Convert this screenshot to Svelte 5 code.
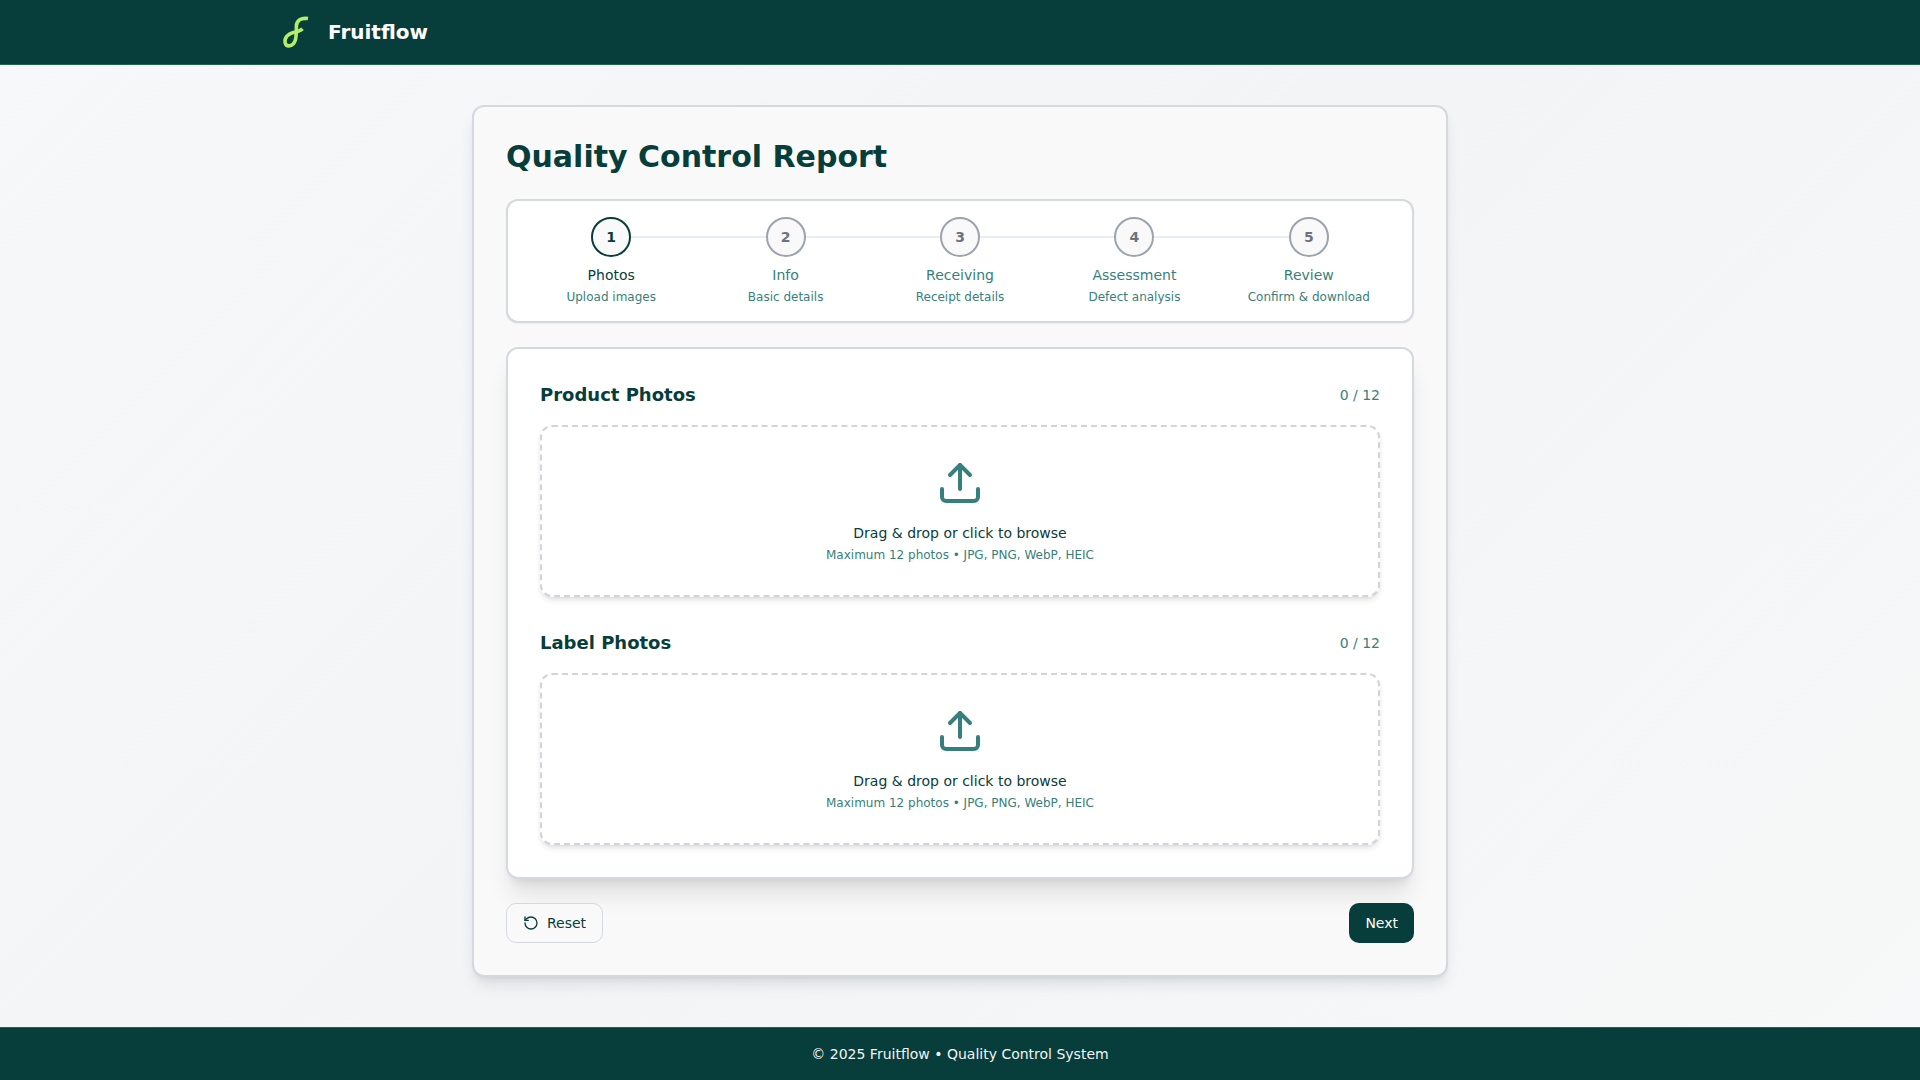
<script>
  const steps = [
    { title: 'Photos', description: 'Upload images' },
    { title: 'Info', description: 'Basic details' },
    { title: 'Receiving', description: 'Receipt details' },
    { title: 'Assessment', description: 'Defect analysis' },
    { title: 'Review', description: 'Confirm & download' }
  ];

  const MAX_PHOTOS = 12;

  let current = $state(0);
  let sections = $state([
    { id: 'product', title: 'Product Photos', count: 0 },
    { id: 'label', title: 'Label Photos', count: 0 }
  ]);

  function addFiles(section, files) {
    section.count = Math.min(MAX_PHOTOS, section.count + files.length);
  }

  function handleDrop(event, section) {
    event.preventDefault();
    addFiles(section, event.dataTransfer.files);
  }

  function reset() {
    current = 0;
    for (const section of sections) section.count = 0;
  }

  function next() {
    if (current < steps.length - 1) current += 1;
  }
</script>

<div class="page">
  <header class="site-header">
    <div class="header-inner">
      <a href="/" class="brand">
        <svg class="logo" viewBox="0 0 40 40" fill="none" stroke="currentColor" stroke-width="3.6" stroke-linejoin="round" aria-hidden="true">
          <path d="M32 6.600C25 5.400 20.600 8.500 20.400 14C20.200 20 20.600 25 19 29C17 34.500 10.500 35.500 9.200 31C8 26 12 22 16.500 20.800C20.500 19.800 24 19.500 26.500 16.800" />
        </svg>
        <span class="brand-name">Fruitflow</span>
      </a>
    </div>
  </header>

  <main>
    <div class="report">
      <h1>Quality Control Report</h1>

      <ol class="stepper">
        {#each steps as step, i}
          <li class="step" class:active={i === current}>
            <span class="step-number">{i + 1}</span>
            <span class="step-title">{step.title}</span>
            <span class="step-description">{step.description}</span>
          </li>
        {/each}
      </ol>

      <div class="panel">
        {#each sections as section (section.id)}
          <section>
            <div class="section-header">
              <h2>{section.title}</h2>
              <span class="count">{section.count} / {MAX_PHOTOS}</span>
            </div>
            <label
              class="dropzone"
              ondragover={(e) => e.preventDefault()}
              ondrop={(e) => handleDrop(e, section)}
            >
              <input
                type="file"
                class="file-input"
                accept=".jpg,.jpeg,.png,.webp,.heic"
                multiple
                onchange={(e) => addFiles(section, e.currentTarget.files)}
              />
              <svg class="upload-icon" viewBox="0 0 24 24" fill="none" stroke="currentColor" stroke-width="2" stroke-linecap="round" stroke-linejoin="round" aria-hidden="true">
                <path d="M21 15v4a2 2 0 0 1-2 2H5a2 2 0 0 1-2-2v-4" />
                <path d="M17 8l-5-5-5 5" />
                <path d="M12 3v12" />
              </svg>
              <span class="drop-title">Drag &amp; drop or click to browse</span>
              <span class="drop-hint">Maximum {MAX_PHOTOS} photos • JPG, PNG, WebP, HEIC</span>
            </label>
          </section>
        {/each}
      </div>

      <div class="actions">
        <button type="button" class="btn btn-outline" onclick={reset}>
          <svg viewBox="0 0 24 24" fill="none" stroke="currentColor" stroke-width="2" stroke-linecap="round" stroke-linejoin="round" aria-hidden="true">
            <path d="M3 12a9 9 0 1 0 9-9 9.750 9.750 0 0 0-6.740 2.740L3 8" />
            <path d="M3 3v5h5" />
          </svg>
          Reset
        </button>
        <button type="button" class="btn btn-primary" onclick={next}>Next</button>
      </div>
    </div>
  </main>

  <footer>© 2025 Fruitflow • Quality Control System</footer>
</div>

<style>
  :global(body) {
    margin: 0;
  }

  .page {
    --forest: #073d3a;
    --teal: #367f7c;
    --line: #d3d9df;
    --surface: #f9f9f9;

    display: flex;
    flex-direction: column;
    min-height: 100vh;
    background: linear-gradient(135deg, #f7f8f9 0%, #f3f4f6 50%, #f7f8f8 100%);
    color: var(--forest);
    font-family: "DejaVu Sans", sans-serif;
    font-size: 14px;
    line-height: 20px;
  }

  .page * {
    box-sizing: border-box;
  }

  .site-header {
    background: var(--forest);
    border-bottom: 1px solid #24614e;
    box-shadow: 0 1px 2px rgba(0, 0, 0, 0.05);
  }

  .header-inner {
    display: flex;
    align-items: center;
    max-width: 1400px;
    height: 64px;
    margin: 0 auto;
    padding: 0 16px;
  }

  .brand {
    display: flex;
    align-items: center;
    gap: 12px;
    color: #fff;
    text-decoration: none;
  }

  .logo {
    width: 40px;
    height: 40px;
    color: #b4ed6b;
  }

  .brand-name {
    font-size: 20px;
    font-weight: 700;
    line-height: 28px;
  }

  main {
    flex: 1;
    width: 100%;
    max-width: 1024px;
    box-sizing: border-box;
    margin: 0 auto;
    padding: 40px 24px;
  }

  .report {
    padding: 32px;
    background: var(--surface);
    border: 2px solid var(--line);
    border-radius: 12px;
    box-shadow:
      0 10px 15px -3px rgba(0, 0, 0, 0.1),
      0 4px 6px -4px rgba(0, 0, 0, 0.1);
  }

  h1 {
    margin: 0 0 24px;
    font-size: 30px;
    font-weight: 700;
    line-height: 36px;
  }

  .stepper {
    display: flex;
    margin: 0 0 24px;
    padding: 16px;
    list-style: none;
    background: #fff;
    border: 2px solid var(--line);
    border-radius: 12px;
    box-shadow: 0 1px 2px rgba(0, 0, 0, 0.05);
  }

  .step {
    position: relative;
    display: flex;
    flex: 1;
    flex-direction: column;
    align-items: center;
    color: var(--teal);
    text-align: center;
  }

  /* Connector running to the next circle */
  .step:not(:last-child)::after {
    content: '';
    position: absolute;
    top: 19px;
    left: calc(50% + 20px);
    width: calc(100% - 40px);
    height: 2px;
    background: #e9eef2;
  }

  .step-number {
    display: flex;
    align-items: center;
    justify-content: center;
    width: 40px;
    height: 40px;
    margin-bottom: 8px;
    background: var(--surface);
    border: 2px solid #9ca3af;
    border-radius: 50%;
    color: #6b7280;
    font-weight: 700;
  }

  .step.active .step-number {
    border-color: var(--forest);
    color: var(--forest);
  }

  .step.active .step-title {
    color: var(--forest);
  }

  .step-description {
    margin-top: 4px;
    font-size: 12px;
    line-height: 16px;
  }

  .panel {
    display: flex;
    flex-direction: column;
    gap: 32px;
    padding: 32px;
    background: #fff;
    border: 2px solid var(--line);
    border-radius: 12px;
    box-shadow:
      0 20px 25px -5px rgba(0, 0, 0, 0.1),
      0 8px 10px -6px rgba(0, 0, 0, 0.1);
  }

  .section-header {
    display: flex;
    align-items: center;
    justify-content: space-between;
    margin-bottom: 16px;
  }

  h2 {
    margin: 0;
    font-size: 18px;
    font-weight: 700;
    line-height: 28px;
  }

  .count {
    color: var(--teal);
  }

  .dropzone {
    display: flex;
    flex-direction: column;
    align-items: center;
    padding: 32px;
    background: #fff;
    border: 2px dashed #d1d5db;
    border-radius: 12px;
    box-shadow:
      0 4px 6px -1px rgba(0, 0, 0, 0.1),
      0 2px 4px -2px rgba(0, 0, 0, 0.1);
    text-align: center;
    cursor: pointer;
  }

  .dropzone:hover,
  .dropzone:focus-within {
    border-color: var(--teal);
  }

  .file-input {
    position: absolute;
    width: 1px;
    height: 1px;
    overflow: hidden;
    opacity: 0;
  }

  .upload-icon {
    width: 48px;
    height: 48px;
    margin-bottom: 16px;
    color: var(--teal);
  }

  .drop-hint {
    margin-top: 4px;
    color: var(--teal);
    font-size: 12px;
    line-height: 16px;
  }

  .actions {
    display: flex;
    justify-content: space-between;
    margin-top: 24px;
  }

  .btn {
    display: inline-flex;
    align-items: center;
    justify-content: center;
    gap: 8px;
    height: 40px;
    padding: 0 16px;
    border: none;
    border-radius: 10px;
    font: inherit;
    cursor: pointer;
  }

  .btn svg {
    width: 16px;
    height: 16px;
  }

  .btn-outline {
    background: var(--surface);
    border: 1px solid var(--line);
    color: var(--forest);
  }

  .btn-primary {
    background: var(--forest);
    color: #fff;
  }

  footer {
    padding: 16px;
    background: var(--forest);
    border-top: 1px solid #24614e;
    color: #f3f4f6;
    text-align: center;
  }
</style>
